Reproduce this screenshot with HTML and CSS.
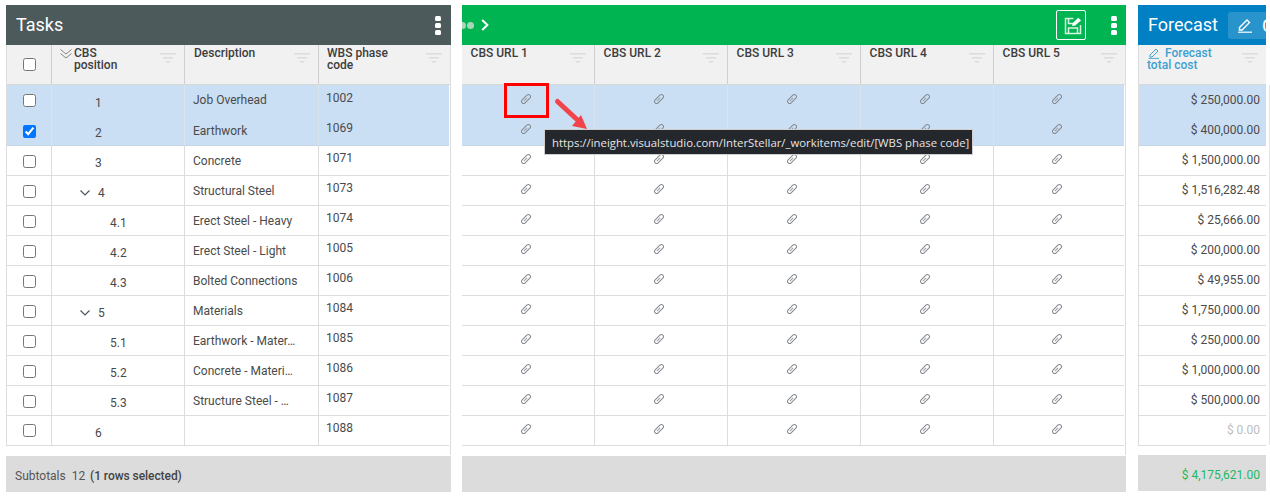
FILE: index.html
```html
<!DOCTYPE html>
<html lang="en">
<head>
<meta charset="utf-8">
<title>Tasks</title>
<link rel="stylesheet" href="styles.css">
</head>
<body>
<svg class="defs" width="0" height="0" aria-hidden="true">
  <symbol id="link" viewBox="0 0 12 12">
    <g fill="none" stroke="#84898f" stroke-width="1" transform="rotate(-45 6 6)">
      <rect x="0.6" y="3.9" width="10.8" height="4.2" rx="2.1"/>
      <path d="M3 6 H7.5" stroke="#9a9fa5"/>
    </g>
  </symbol>
  <symbol id="filter" viewBox="0 0 16 10">
    <rect x="0" y="0" width="16" height="1.5" fill="#dcdcdc"/>
    <rect x="3" y="4" width="10" height="1.5" fill="#dcdcdc"/>
    <rect x="6" y="8" width="4" height="1.5" fill="#dcdcdc"/>
  </symbol>
  <symbol id="down" viewBox="0 0 10 6">
    <path d="M0.5 0.5 L5 5 L9.5 0.5" fill="none" stroke="#4a5560" stroke-width="1.2"/>
  </symbol>
</svg>

<section class="panel panel-tasks">
  <header class="bar bar-slate">
    <h2 class="title">Tasks</h2>
    <span class="kebab"><i></i><i></i><i></i></span>
  </header>
  <div class="table">
    <div class="row head cols-tasks">
      <div class="cell check"><input type="checkbox"></div>
      <div class="cell hcell">
        <svg class="sort" viewBox="0 0 12 10"><path d="M0.5 0.5 L6 5 L11.5 0.5 M0.5 4.5 L6 9 L11.5 4.5" fill="none" stroke="#777" stroke-width="0.9"/></svg>
        <span class="htext">CBS<br>position</span>
        <svg class="filter"><use href="#filter"/></svg>
      </div>
      <div class="cell hcell"><span class="htext">Description</span><svg class="filter"><use href="#filter"/></svg></div>
      <div class="cell hcell"><span class="htext">WBS phase<br>code</span><svg class="filter"><use href="#filter"/></svg></div>
    </div>
    <div class="row sel cols-tasks"><div class="cell check"><input type="checkbox"></div><div class="cell pos">1</div><div class="cell desc">Job Overhead</div><div class="cell code">1002</div></div>
    <div class="row sel cols-tasks"><div class="cell check"><input type="checkbox" checked></div><div class="cell pos">2</div><div class="cell desc">Earthwork</div><div class="cell code">1069</div></div>
    <div class="row cols-tasks"><div class="cell check"><input type="checkbox"></div><div class="cell pos">3</div><div class="cell desc">Concrete</div><div class="cell code">1071</div></div>
    <div class="row cols-tasks"><div class="cell check"><input type="checkbox"></div><div class="cell pos parent"><svg class="down"><use href="#down"/></svg>4</div><div class="cell desc">Structural Steel</div><div class="cell code">1073</div></div>
    <div class="row cols-tasks"><div class="cell check"><input type="checkbox"></div><div class="cell pos child">4.1</div><div class="cell desc">Erect Steel - Heavy</div><div class="cell code">1074</div></div>
    <div class="row cols-tasks"><div class="cell check"><input type="checkbox"></div><div class="cell pos child">4.2</div><div class="cell desc">Erect Steel - Light</div><div class="cell code">1005</div></div>
    <div class="row cols-tasks"><div class="cell check"><input type="checkbox"></div><div class="cell pos child">4.3</div><div class="cell desc">Bolted Connections</div><div class="cell code">1006</div></div>
    <div class="row cols-tasks"><div class="cell check"><input type="checkbox"></div><div class="cell pos parent"><svg class="down"><use href="#down"/></svg>5</div><div class="cell desc">Materials</div><div class="cell code">1084</div></div>
    <div class="row cols-tasks"><div class="cell check"><input type="checkbox"></div><div class="cell pos child">5.1</div><div class="cell desc">Earthwork - Mater…</div><div class="cell code">1085</div></div>
    <div class="row cols-tasks"><div class="cell check"><input type="checkbox"></div><div class="cell pos child">5.2</div><div class="cell desc">Concrete - Materi…</div><div class="cell code">1086</div></div>
    <div class="row cols-tasks"><div class="cell check"><input type="checkbox"></div><div class="cell pos child">5.3</div><div class="cell desc">Structure Steel - …</div><div class="cell code">1087</div></div>
    <div class="row cols-tasks"><div class="cell check"><input type="checkbox"></div><div class="cell pos">6</div><div class="cell desc"></div><div class="cell code">1088</div></div>
  </div>
  <footer class="foot">Subtotals&nbsp; 12&nbsp; <b>(1 rows selected)</b></footer>
</section>

<section class="panel panel-urls">
  <header class="bar bar-green">
    <span class="dots"><i></i><i></i></span>
    <svg class="chev" viewBox="0 0 8 12"><path d="M1.2 1 L6.4 6 L1.2 11" fill="none" stroke="#fff" stroke-width="2"/></svg>
    <span class="spring"></span>
    <span class="savebox">
      <svg viewBox="0 0 18 18" width="18" height="18"><path d="M9.5 1.5 H1.5 V16.5 H16.5 V8" fill="none" stroke="#d4f3e0" stroke-width="1.5"/><path d="M4.5 1.5 V6.5 H9 M4.5 16.5 V11 H13.5 V16.5" fill="none" stroke="#d4f3e0" stroke-width="1.5"/><path d="M8 9 L8.8 6 L14.2 0.8 L17 3.4 L11.2 8.6 Z" fill="#fff"/></svg>
    </span>
    <span class="kebab"><i></i><i></i><i></i></span>
  </header>
  <div class="table noleft">
    <div class="row head cols-urls">
      <div class="cell hcell"><span class="htext">CBS URL 1</span><svg class="filter"><use href="#filter"/></svg></div>
      <div class="cell hcell"><span class="htext">CBS URL 2</span><svg class="filter"><use href="#filter"/></svg></div>
      <div class="cell hcell"><span class="htext">CBS URL 3</span><svg class="filter"><use href="#filter"/></svg></div>
      <div class="cell hcell"><span class="htext">CBS URL 4</span><svg class="filter"><use href="#filter"/></svg></div>
      <div class="cell hcell"><span class="htext">CBS URL 5</span><svg class="filter"><use href="#filter"/></svg></div>
    </div>
    <div class="row sel cols-urls"><div class="cell url"><svg class="link"><use href="#link"/></svg></div><div class="cell url"><svg class="link"><use href="#link"/></svg></div><div class="cell url"><svg class="link"><use href="#link"/></svg></div><div class="cell url"><svg class="link"><use href="#link"/></svg></div><div class="cell url"><svg class="link"><use href="#link"/></svg></div></div>
    <div class="row sel cols-urls"><div class="cell url"><svg class="link"><use href="#link"/></svg></div><div class="cell url"><svg class="link"><use href="#link"/></svg></div><div class="cell url"><svg class="link"><use href="#link"/></svg></div><div class="cell url"><svg class="link"><use href="#link"/></svg></div><div class="cell url"><svg class="link"><use href="#link"/></svg></div></div>
    <div class="row cols-urls"><div class="cell url"><svg class="link"><use href="#link"/></svg></div><div class="cell url"><svg class="link"><use href="#link"/></svg></div><div class="cell url"><svg class="link"><use href="#link"/></svg></div><div class="cell url"><svg class="link"><use href="#link"/></svg></div><div class="cell url"><svg class="link"><use href="#link"/></svg></div></div>
    <div class="row cols-urls"><div class="cell url"><svg class="link"><use href="#link"/></svg></div><div class="cell url"><svg class="link"><use href="#link"/></svg></div><div class="cell url"><svg class="link"><use href="#link"/></svg></div><div class="cell url"><svg class="link"><use href="#link"/></svg></div><div class="cell url"><svg class="link"><use href="#link"/></svg></div></div>
    <div class="row cols-urls"><div class="cell url"><svg class="link"><use href="#link"/></svg></div><div class="cell url"><svg class="link"><use href="#link"/></svg></div><div class="cell url"><svg class="link"><use href="#link"/></svg></div><div class="cell url"><svg class="link"><use href="#link"/></svg></div><div class="cell url"><svg class="link"><use href="#link"/></svg></div></div>
    <div class="row cols-urls"><div class="cell url"><svg class="link"><use href="#link"/></svg></div><div class="cell url"><svg class="link"><use href="#link"/></svg></div><div class="cell url"><svg class="link"><use href="#link"/></svg></div><div class="cell url"><svg class="link"><use href="#link"/></svg></div><div class="cell url"><svg class="link"><use href="#link"/></svg></div></div>
    <div class="row cols-urls"><div class="cell url"><svg class="link"><use href="#link"/></svg></div><div class="cell url"><svg class="link"><use href="#link"/></svg></div><div class="cell url"><svg class="link"><use href="#link"/></svg></div><div class="cell url"><svg class="link"><use href="#link"/></svg></div><div class="cell url"><svg class="link"><use href="#link"/></svg></div></div>
    <div class="row cols-urls"><div class="cell url"><svg class="link"><use href="#link"/></svg></div><div class="cell url"><svg class="link"><use href="#link"/></svg></div><div class="cell url"><svg class="link"><use href="#link"/></svg></div><div class="cell url"><svg class="link"><use href="#link"/></svg></div><div class="cell url"><svg class="link"><use href="#link"/></svg></div></div>
    <div class="row cols-urls"><div class="cell url"><svg class="link"><use href="#link"/></svg></div><div class="cell url"><svg class="link"><use href="#link"/></svg></div><div class="cell url"><svg class="link"><use href="#link"/></svg></div><div class="cell url"><svg class="link"><use href="#link"/></svg></div><div class="cell url"><svg class="link"><use href="#link"/></svg></div></div>
    <div class="row cols-urls"><div class="cell url"><svg class="link"><use href="#link"/></svg></div><div class="cell url"><svg class="link"><use href="#link"/></svg></div><div class="cell url"><svg class="link"><use href="#link"/></svg></div><div class="cell url"><svg class="link"><use href="#link"/></svg></div><div class="cell url"><svg class="link"><use href="#link"/></svg></div></div>
    <div class="row cols-urls"><div class="cell url"><svg class="link"><use href="#link"/></svg></div><div class="cell url"><svg class="link"><use href="#link"/></svg></div><div class="cell url"><svg class="link"><use href="#link"/></svg></div><div class="cell url"><svg class="link"><use href="#link"/></svg></div><div class="cell url"><svg class="link"><use href="#link"/></svg></div></div>
    <div class="row cols-urls"><div class="cell url"><svg class="link"><use href="#link"/></svg></div><div class="cell url"><svg class="link"><use href="#link"/></svg></div><div class="cell url"><svg class="link"><use href="#link"/></svg></div><div class="cell url"><svg class="link"><use href="#link"/></svg></div><div class="cell url"><svg class="link"><use href="#link"/></svg></div></div>
  </div>
  <footer class="foot"></footer>
</section>

<section class="panel panel-forecast">
  <header class="bar bar-blue">
    <h2 class="title">Forecast</h2>
    <span class="editbtn">
      <svg viewBox="0 0 16 16" width="16" height="16"><path d="M2.5 10.5 L10 3 L12.5 5.5 L5 13 H2.5 Z" fill="none" stroke="#fff" stroke-width="1.4"/><path d="M1 15.2 H15" stroke="#fff" stroke-width="1.2"/></svg>
      <span class="edittext">C</span>
    </span>
  </header>
  <div class="table short">
    <div class="row head cols-forecast">
      <div class="cell hcell forecast-head">
        <span class="htext blue"><svg class="pen" viewBox="0 0 12 12"><path d="M2 8 L8 2 L10 4 L4 10 H2 Z" fill="none" stroke="#3fa0d2" stroke-width="1"/><path d="M0.5 11.4 H11" stroke="#3fa0d2" stroke-width="0.9"/></svg>Forecast<br>total cost</span>
        <svg class="filter"><use href="#filter"/></svg>
      </div>
    </div>
    <div class="row sel cols-forecast"><div class="cell money">$ 250,000.00</div></div>
    <div class="row sel cols-forecast"><div class="cell money">$ 400,000.00</div></div>
    <div class="row cols-forecast"><div class="cell money">$ 1,500,000.00</div></div>
    <div class="row cols-forecast"><div class="cell money">$ 1,516,282.48</div></div>
    <div class="row cols-forecast"><div class="cell money">$ 25,666.00</div></div>
    <div class="row cols-forecast"><div class="cell money">$ 200,000.00</div></div>
    <div class="row cols-forecast"><div class="cell money">$ 49,955.00</div></div>
    <div class="row cols-forecast"><div class="cell money">$ 1,750,000.00</div></div>
    <div class="row cols-forecast"><div class="cell money">$ 250,000.00</div></div>
    <div class="row cols-forecast"><div class="cell money">$ 1,000,000.00</div></div>
    <div class="row cols-forecast"><div class="cell money">$ 500,000.00</div></div>
    <div class="row cols-forecast"><div class="cell money zero">$ 0.00</div></div>
  </div>
  <footer class="foot total">$ 4,175,621.00</footer>
</section>
<div class="edge"></div>

<div class="redbox"></div>
<svg class="arrow" viewBox="0 0 40 36" width="40" height="36"><path d="M4.5 4.5 L24 22.5" stroke="#f2434b" stroke-width="5" stroke-linecap="round"/><path d="M34 32 L19 29 L28 18 Z" fill="#f2434b"/></svg>
<div class="tooltip">https://ineight.visualstudio.com/InterStellar/_workitems/edit/[WBS phase code]</div>
</body>
</html>
```

FILE: styles.css
```css
* { box-sizing: border-box; }
html, body { margin: 0; height: 100%; }
body {
  position: relative;
  display: flex;
  align-items: flex-start;
  padding: 5px 0 0 6px;
  background: #fff;
  font-family: Roboto, "Liberation Sans", sans-serif;
  font-size: 12px;
  color: #4a4a4a;
  overflow: hidden;
}
.defs { position: absolute; }

.panel { flex: none; }
.panel-tasks { width: 445px; }
.panel-urls { width: 664px; margin-left: 11px; }
.panel-forecast { width: 128px; margin-left: 12px; }
.edge { flex: none; width: 1px; height: 360px; margin: 80px 0 0 3px; background: #e4e4e4; }

.bar {
  display: flex;
  align-items: center;
  height: 40px;
  color: #fff;
  overflow: hidden;
}
.bar-slate { background: #4d5a5c; padding: 0 10px; justify-content: space-between; }
.bar-green { background: #00b551; padding-right: 9px; }
.bar-blue { background: #0180c3; padding-left: 10px; }
.title { margin: 0; font-size: 18px; font-weight: 400; line-height: 40px; }
.kebab { display: flex; flex-direction: column; gap: 2px; width: 6px; }
.kebab i { display: block; width: 6px; height: 5px; border-radius: 1.5px; background: #fff; }

.dots { display: flex; gap: 1px; margin-left: -3px; }
.dots i { display: block; width: 7px; height: 7px; border-radius: 50%; background: #a9d6b8; }
.chev { width: 8px; height: 12px; margin-left: 7px; }
.spring { flex: 1; }
.savebox {
  display: flex;
  align-items: center;
  justify-content: center;
  width: 30px;
  height: 30px;
  margin-right: 25px;
  padding: 1px 0 0 3px;
  border: 1px solid #fff;
  border-radius: 2px;
}
.editbtn {
  display: flex;
  align-items: center;
  gap: 9px;
  flex: none;
  height: 27px;
  margin-left: 10px;
  padding-left: 9px;
  border-radius: 3px 0 0 3px;
  background: rgba(255, 255, 255, 0.16);
  font-size: 18px;
}
.edittext { white-space: nowrap; }

.table {
  height: 410px;
  border-right: 1px solid #ddd;
}
.table.short { border-right: 0; height: 400px; margin-bottom: 10px; }
.row {
  position: relative;
  display: grid;
  height: 30px;
  border-left: 1px solid #ddd;
  box-shadow: 0 1px 0 #ddd;
}
.table:not(.short) .row:not(.head) { margin-right: 1px; }
.noleft .row { border-left: 0; }
.cols-tasks { grid-template-columns: 45px 133px 134px 130px; }
.cols-urls { grid-template-columns: 133px 133px 133px 133px 130px; }
.cols-forecast { grid-template-columns: 127px; }
.head { height: 40px; background: #f1f1f1; border-bottom: 1px solid #d8d8d8; box-shadow: none; }
.head.cols-tasks { grid-template-columns: 45px 133px 134px 131px; }
.head.cols-urls { grid-template-columns: 133px 133px 133px 133px 131px; }
.sel { background: #cbdff4; box-shadow: 0 1px 0 #c4d6e8; }

.cell { position: relative; min-width: 0; border-right: 1px solid #ddd; white-space: nowrap; }
.cell:last-child { border-right: 0; }
.sel .cell { border-right-color: #dbe2ea; }
.head .cell { border-right-color: #cfcfcf; }
.head .cell:last-child { border-right: 0; }

.check { display: flex; align-items: center; justify-content: center; }
.check input { margin: 0; width: 13px; height: 13px; }

.hcell { display: flex; padding: 2px 8px 0 8.6px; }
.cols-tasks .hcell { padding-left: 8px; }
.cols-tasks .hcell:nth-child(3) { padding-left: 9px; }
.forecast-head { padding-left: 8px; }
.htext { font-weight: 500; line-height: 12px; color: #3d3d3d; }
.htext.blue { color: #3fa0d2; }
.sort { flex: none; width: 12px; height: 10px; margin: 2px 2px 0 0; }
.filter { position: absolute; top: 8px; right: 8px; width: 16px; height: 10px; }
.pen { display: inline-block; width: 12px; height: 12px; margin: 0 5px 0 1px; vertical-align: top; }

.pos { padding: 11px 0 0 43px; line-height: 14px; }
.pos.child { padding-left: 58px; }
.pos.parent { padding-left: 28px; }
.down { width: 10px; height: 6px; margin: 0 8px 1px 0; }
.desc { padding-left: 8px; line-height: 32px; }
.row.sel:nth-child(2) .desc { line-height: 30px; }
.code { padding: 5px 0 0 7px; line-height: 16px; }
.url { display: flex; justify-content: center; padding: 8px 5px 0 0; }
.link { width: 12px; height: 12px; }
.money { padding-right: 6px; text-align: right; line-height: 30px; }
.money.zero { color: #bdbdbd; }

.foot {
  height: 36px;
  margin-top: 1px;
  padding-left: 9px;
  background: #dcdcdc;
  line-height: 40px;
  color: #555;
}
.foot b { font-weight: 500; color: #444; letter-spacing: -0.06px; margin-left: -1px; }
.foot.total { margin-top: 1px; padding: 0 6px 0 0; text-align: right; color: #1fb760; font-size: 12px; }

.redbox {
  position: absolute;
  left: 504px;
  top: 83px;
  width: 45px;
  height: 35px;
  border: 3px solid #f00;
}
.arrow { position: absolute; left: 553px; top: 97px; }
.tooltip {
  position: absolute;
  left: 544px;
  top: 129px;
  height: 26px;
  padding: 0 3px 0 7px;
  border: 1px solid #cfcfcf;
  background: #24272c;
  color: #e4e4e4;
  font-family: "Open Sans", sans-serif;
  font-size: 11.35px;
  line-height: 26px;
  white-space: nowrap;
}
```
